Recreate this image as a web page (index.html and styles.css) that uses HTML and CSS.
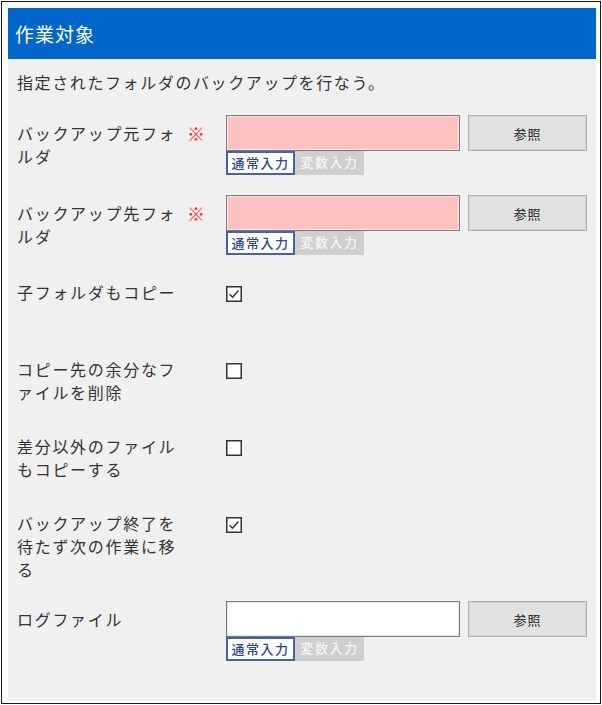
FILE: index.html
```html
<!DOCTYPE html>
<html lang="ja">
<head>
<meta charset="utf-8">
<title>作業対象</title>
<link rel="stylesheet" href="styles.css">
</head>
<body>
<div class="frame">
  <div class="panel">
    <div class="head">作業対象</div>
    <div class="body">
      <p class="desc">指定されたフォルダのバックアップを行なう。</p>

      <div class="row field">
        <div class="label">バックアップ元フォ<br>ルダ</div>
        <div class="mark">※</div>
        <div class="ctrl">
          <div class="inputline">
            <div class="input req"></div>
            <div class="btn">参照</div>
          </div>
          <div class="tabs"><span class="tab on">通常入力</span><span class="tab">変数入力</span></div>
        </div>
      </div>

      <div class="row field">
        <div class="label">バックアップ先フォ<br>ルダ</div>
        <div class="mark">※</div>
        <div class="ctrl">
          <div class="inputline">
            <div class="input req"></div>
            <div class="btn">参照</div>
          </div>
          <div class="tabs"><span class="tab on">通常入力</span><span class="tab">変数入力</span></div>
        </div>
      </div>

      <div class="row check">
        <div class="label">子フォルダもコピー</div>
        <div class="mark"></div>
        <div class="ctrl">
          <span class="cb"><svg viewBox="0 0 16 16" width="16" height="16"><rect x="0.75" y="0.75" width="14.5" height="14.5" fill="#fff" stroke="#333" stroke-width="1.5"/><path d="M3.6 8.2 L6.6 11.2 L12.4 4.6" fill="none" stroke="#333" stroke-width="1.5"/></svg></span>
        </div>
      </div>

      <div class="row check">
        <div class="label">コピー先の余分なフ<br>ァイルを削除</div>
        <div class="mark"></div>
        <div class="ctrl">
          <span class="cb"><svg viewBox="0 0 16 16" width="16" height="16"><rect x="0.75" y="0.75" width="14.5" height="14.5" fill="#fff" stroke="#333" stroke-width="1.5"/></svg></span>
        </div>
      </div>

      <div class="row check">
        <div class="label">差分以外のファイル<br>もコピーする</div>
        <div class="mark"></div>
        <div class="ctrl">
          <span class="cb"><svg viewBox="0 0 16 16" width="16" height="16"><rect x="0.75" y="0.75" width="14.5" height="14.5" fill="#fff" stroke="#333" stroke-width="1.5"/></svg></span>
        </div>
      </div>

      <div class="row check">
        <div class="label">バックアップ終了を<br>待たず次の作業に移<br>る</div>
        <div class="mark"></div>
        <div class="ctrl">
          <span class="cb"><svg viewBox="0 0 16 16" width="16" height="16"><rect x="0.75" y="0.75" width="14.5" height="14.5" fill="#fff" stroke="#333" stroke-width="1.5"/><path d="M3.6 8.2 L6.6 11.2 L12.4 4.6" fill="none" stroke="#333" stroke-width="1.5"/></svg></span>
        </div>
      </div>

      <div class="row field">
        <div class="label">ログファイル</div>
        <div class="mark"></div>
        <div class="ctrl">
          <div class="inputline">
            <div class="input"></div>
            <div class="btn">参照</div>
          </div>
          <div class="tabs"><span class="tab on">通常入力</span><span class="tab">変数入力</span></div>
        </div>
      </div>
    </div>
  </div>
</div>
</body>
</html>
```

FILE: styles.css
```css
* { box-sizing: border-box; }

html, body {
  margin: 0;
  padding: 0;
  background: #fff;
}

body {
  font-family: "Noto Sans CJK JP", "Noto Sans", sans-serif;
  color: #333;
}

.frame {
  margin: 1px;
  width: 600px;
  height: 703px;
  border: 1px solid #1a1a1a;
  padding: 6px 4px 2px 6px;
  display: flex;
  flex-direction: column;
  background: #fff;
}

.panel {
  flex: 1;
  background: #f0f0f0;
  display: flex;
  flex-direction: column;
}

.head {
  height: 51px;
  background: #0066cc;
  color: #fff;
  font-size: 19px;
  letter-spacing: 1px;
  line-height: 51px;
  padding-left: 7px;
}

.body {
  padding: 0 9px 0 9px;
}

.desc {
  margin: 12px 0 21px;
  font-size: 16px;
  letter-spacing: 1.6px;
  line-height: 23px;
}

.row {
  display: grid;
  grid-template-columns: 171px 38px 1fr;
  align-items: start;
}

.field + .field { margin-top: 20px; }
.field + .check { margin-top: 26px; }
.check + .check { margin-top: 31px; }
.check + .field { margin-top: 20px; }

.label {
  font-size: 16px;
  letter-spacing: 1.7px;
  line-height: 23px;
  white-space: nowrap;
}

.field .label,
.field .mark { padding-top: 7px; }

.check .label { min-height: 46px; }

.mark {
  color: #ff2a2a;
  font-size: 18px;
  line-height: 23px;
  margin-left: -1px;
}

.inputline {
  display: flex;
  gap: 8px;
  height: 36px;
}

.input {
  width: 234px;
  height: 36px;
  background: #fff;
  border: 1px solid #7a7a7a;
  box-shadow: inset 0 0 0 1px #e6e6e6;
}

.input.req {
  background: #ffc0c0;
  box-shadow: inset 0 0 0 1px #ffe6e6;
}

.btn {
  width: 119px;
  height: 36px;
  background: #e1e1e1;
  border: 1px solid #adadad;
  box-shadow: inset 0 0 0 1px #d6d6d6;
  font-size: 13px;
  letter-spacing: 1px;
  color: #222;
  display: flex;
  align-items: center;
  justify-content: center;
}

.tabs {
  display: flex;
  height: 24px;
}

.tab {
  height: 24px;
  width: 69px;
  font-size: 13px;
  font-weight: 500;
  letter-spacing: 1.5px;
  line-height: 22px;
  text-align: center;
  background: #cfcfcf;
  color: #f4f4f4;
}

.tab.on {
  background: #fff;
  border: 2px solid #4264a6;
  color: #2c4a8c;
  line-height: 20px;
}

.cb {
  display: block;
  width: 16px;
  height: 16px;
  margin-top: 5px;
}

.cb svg { display: block; }
```
